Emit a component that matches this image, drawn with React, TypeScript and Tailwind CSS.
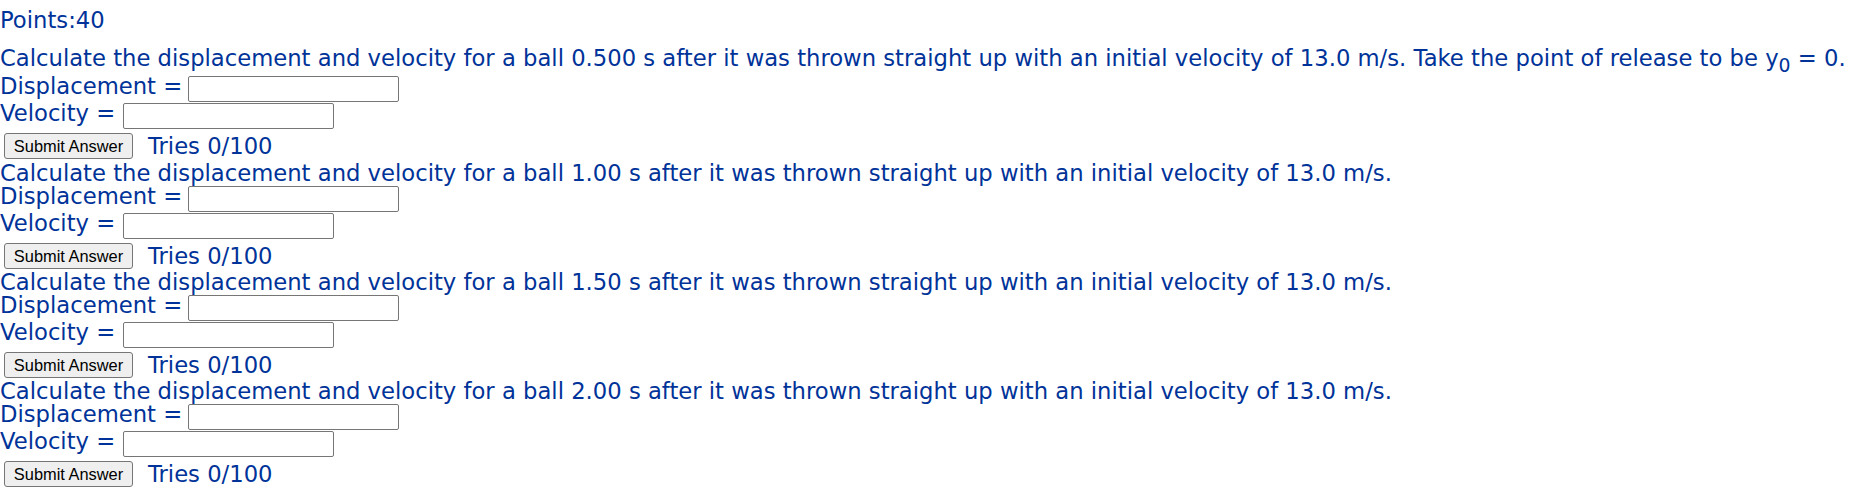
const PARTS = [
  { t: "0.500", first: true },
  { t: "1.00", first: false },
  { t: "1.50", first: false },
  { t: "2.00", first: false },
];

function AnswerBox({ gap }: { gap: string }) {
  return (
    <input
      type="text"
      className={`${gap} mt-[3px] w-[211px] h-[26px] border border-[#767676] rounded-[2px] bg-white outline-none`}
    />
  );
}

function Part({ t, first }: { t: string; first: boolean }) {
  return (
    <div>
      {/* вопрос */}
      <div className={first ? "h-[28px]" : "h-[23px]"}>
        <span className="block leading-[26px] whitespace-nowrap">
          Calculate the displacement and velocity for a ball {t} s after it was thrown straight up with an
          initial velocity of 13.0 m/s.
          {first && (
            <>
              {" "}Take the point of release to be y
              <sub className="text-[83%] bottom-[-0.3em]">0</sub> = 0.
            </>
          )}
        </span>
      </div>

      <div className="flex items-start h-[27px]">
        <span className="block leading-[26px] whitespace-nowrap">Displacement =</span>
        <AnswerBox gap="ml-[6px]" />
      </div>

      <div className="flex items-start h-[33px]">
        <span className="block leading-[26px] whitespace-nowrap">Velocity =</span>
        <AnswerBox gap="ml-[8px]" />
      </div>

      <div className={`flex items-start ${first ? "h-[27px]" : "h-[26px]"}`}>
        <button
          type="button"
          className="ml-[4px] w-[129px] h-[26px] border border-[#767676] rounded-[3px] bg-[#efefef] text-black text-[16.4px] leading-none font-['Liberation_Sans',Arial,sans-serif]"
        >
          Submit Answer
        </button>
        <span className="block ml-[15px] leading-[26px] whitespace-nowrap">Tries 0/100</span>
      </div>
    </div>
  );
}

export default function App() {
  return (
    <div className="bg-white w-[1857px] h-[500px] text-[#003399] text-[22.7px] font-['DejaVu_Sans',Verdana,sans-serif]">
      <div className="h-[45px] pt-[7px]">
        <span className="block leading-[26px]">Points:40</span>
      </div>
      {PARTS.map((p) => (
        <Part key={p.t} t={p.t} first={p.first} />
      ))}
    </div>
  );
}
